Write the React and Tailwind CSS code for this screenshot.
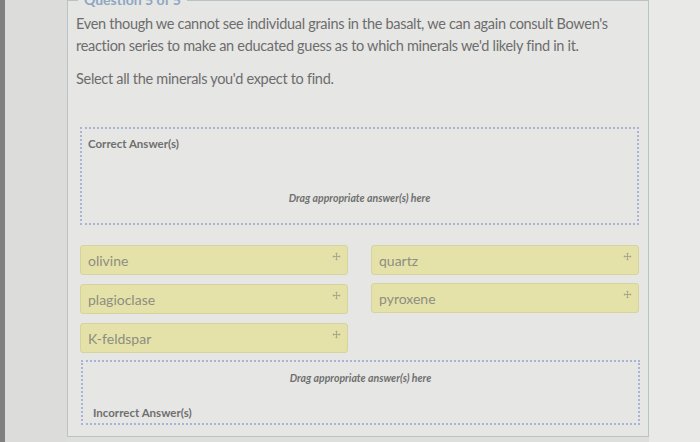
import React from "react";

const Move = () => (
  <svg width="9" height="9" viewBox="0 0 10 10" className="text-[#a9a78c]">
    <path d="M5 0.5 L6.6 2.3 H5.6 V4.4 H7.7 V3.4 L9.5 5 L7.7 6.6 V5.6 H5.6 V7.7 H6.6 L5 9.5 L3.4 7.7 H4.4 V5.6 H2.3 V6.6 L0.5 5 L2.3 3.4 V4.4 H4.4 V2.3 H3.4 Z" fill="currentColor" />
  </svg>
);

const Tile = ({ label }) => (
  <div className="relative h-[30px] rounded-[3px] border border-[#d6d39c] bg-[#e4e2a8] flex items-center pl-[7px]">
    <span className="text-[14px] text-[#8e8d82]">{label}</span>
    <div className="absolute top-[6px] right-[6px]">
      <Move />
    </div>
  </div>
);

const dropHint = "Drag appropriate answer(s) here";

export default function App() {
  return (
    <div
      className="w-[700px] h-[442px] flex overflow-hidden bg-[#dededc]"
      style={{ fontFamily: "Lato, 'Open Sans', sans-serif" }}
    >
      <div className="w-[5px] bg-[#808080]" />
      <div className="w-[62px] bg-[#dcdcda]" />
      <fieldset className="w-[582px] h-[446px] mt-[-9px] border border-[#b9c3c6] bg-[#e6e6e4] px-[8px] pb-[10px]">
        <legend className="ml-[2px] px-[6px] text-[14px] leading-[18px] font-bold text-[#8da6c2]">
          Question 5 of 5
        </legend>
        <p className="mt-[4px] text-[14.5px] leading-[22px] text-[#6d6d6d] tracking-[-0.3px]">
          Even though we cannot see individual grains in the basalt, we can again consult Bowen's
          reaction series to make an educated guess as to which minerals we'd likely find in it.
        </p>
        <p className="mt-[11px] text-[14.5px] leading-[22px] text-[#6d6d6d] tracking-[-0.3px]">
          Select all the minerals you'd expect to find.
        </p>

        <div className="mt-[37px] ml-[4px] mr-[1px] h-[98px] border-[2px] border-dotted border-[#a9b3d6] px-[6px] pt-[6px]">
          <div className="text-[11.5px] font-bold text-[#6f6f6f]">Correct Answer(s)</div>
          <div className="mt-[39px] text-center text-[10.5px] font-bold italic text-[#707070]">{dropHint}</div>
        </div>

        <div className="mt-[20px] ml-[4px] mr-[1px] grid grid-cols-2 gap-x-[23px]">
          <div className="flex flex-col gap-[9px]">
            <Tile label="olivine" />
            <Tile label="plagioclase" />
            <Tile label="K-feldspar" />
          </div>
          <div className="flex flex-col gap-[8px]">
            <Tile label="quartz" />
            <Tile label="pyroxene" />
          </div>
        </div>

        <div className="mt-[7px] ml-[5px] h-[65px] border-[2px] border-dotted border-[#a9b3d6] px-[10px] pt-[9px]">
          <div className="text-center text-[10.5px] font-bold italic text-[#707070]">{dropHint}</div>
          <div className="mt-[17px] text-[11.5px] font-bold text-[#6f6f6f]">Incorrect Answer(s)</div>
        </div>
      </fieldset>
      <div className="flex-1 bg-[#e9e9e7]" />
    </div>
  );
}
